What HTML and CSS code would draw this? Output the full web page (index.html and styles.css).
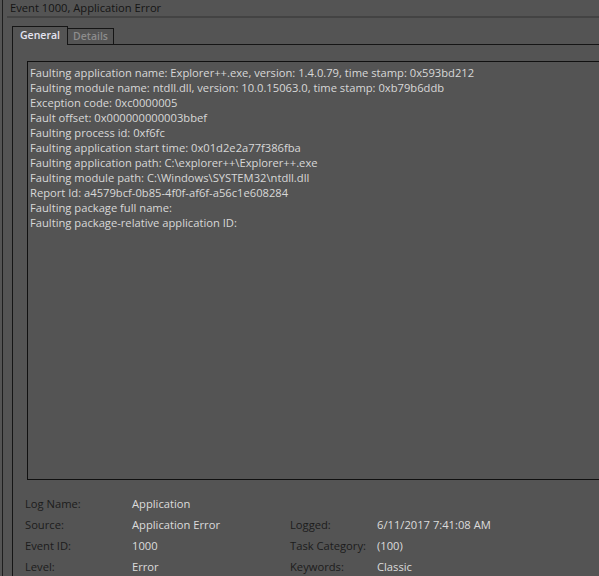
FILE: index.html
```html
<!DOCTYPE html>
<html lang="en">

<head>
	<meta charset="UTF-8">
	<title>Event 1000, Application Error</title>
	<link rel="stylesheet" href="styles.css">
</head>

<body>
	<div class="window">
		<div class="title">Event 1000, Application Error</div>
		<div class="separator"></div>

		<!-- tabs -->
		<div class="tabs">
			<div class="tab active">General</div>
			<div class="tab">Details</div>
		</div>

		<div class="tab-panel">
			<div class="message">
				<div>Faulting application name: Explorer++.exe, version: 1.4.0.79, time stamp: 0x593bd212</div>
				<div>Faulting module name: ntdll.dll, version: 10.0.15063.0, time stamp: 0xb79b6ddb</div>
				<div>Exception code: 0xc0000005</div>
				<div>Fault offset: 0x000000000003bbef</div>
				<div>Faulting process id: 0xf6fc</div>
				<div>Faulting application start time: 0x01d2e2a77f386fba</div>
				<div>Faulting application path: C:\explorer++\Explorer++.exe</div>
				<div>Faulting module path: C:\Windows\SYSTEM32\ntdll.dll</div>
				<div>Report Id: a4579bcf-0b85-4f0f-af6f-a56c1e608284</div>
				<div>Faulting package full name: </div>
				<div>Faulting package-relative application ID: </div>
			</div>

			<div class="props">
				<span class="label">Log Name:</span>
				<span class="value">Application</span>
				<span></span>
				<span></span>

				<span class="label">Source:</span>
				<span class="value">Application Error</span>
				<span class="label">Logged:</span>
				<span class="value">6/11/2017 7:41:08 AM</span>

				<span class="label">Event ID:</span>
				<span class="value">1000</span>
				<span class="label">Task Category:</span>
				<span class="value">(100)</span>

				<span class="label">Level:</span>
				<span class="value">Error</span>
				<span class="label">Keywords:</span>
				<span class="value">Classic</span>
			</div>
		</div>
	</div>
</body>

</html>
```

FILE: styles.css
```css
html,
body {
	margin: 0;
	height: 100%;
	overflow: hidden;
}

body {
	background: #545454;
	font-family: "Open Sans", "Liberation Sans", sans-serif;
	font-size: 11.2px;
	color: #d8d8d8;
}

.window {
	margin-left: 2px;
	min-height: 100%;
	border-left: 1px solid #1e1e1e;
}

.title {
	height: 16px;
	line-height: 15px;
	padding-left: 7px;
	color: #141414;
	font-size: 11.2px;
}

.separator {
	margin-left: 4px;
	height: 2px;
	background: #434343;
}

.tabs {
	display: flex;
	align-items: flex-end;
	margin: 8px 0 0 9px;
	height: 18px;
}

.tab {
	box-sizing: border-box;
	height: 16px;
	padding: 0 5px;
	line-height: 15px;
	border: 1px solid #151515;
	border-bottom: none;
	border-left: none;
	color: #8c8c8c;
	font-weight: 600;
	font-size: 10.5px;
}

.tab.active {
	height: 18px;
	width: 56px;
	padding: 0 7px;
	border-left: 1px solid #151515;
	color: #e4e4f0;
	line-height: 17px;
}

.tab-panel {
	margin-left: 9px;
	border-left: 1px solid #151515;
	border-top: 1px solid #151515;
	padding: 16px 0 0 12px;
	position: relative;
}

.tab-panel::before {
	/* open the top border under the selected tab */
	content: '';
	position: absolute;
	left: 0;
	top: -1px;
	width: 54px;
	height: 1px;
	background: #545454;
}

.message {
	box-sizing: border-box;
	margin-left: 2px;
	height: 419px;
	border: 1px solid #101010;
	border-right: none;
	padding: 3px 2px 0;
	line-height: 15px;
	white-space: nowrap;
	overflow: hidden;
}

.props {
	display: grid;
	grid-template-columns: 107px 158px 87px auto;
	grid-auto-rows: 21px;
	align-items: center;
	margin-top: 13px;
}

.props .label {
	color: #1c1c1c;
}

.props .value {
	color: #dcdcdc;
}
```
